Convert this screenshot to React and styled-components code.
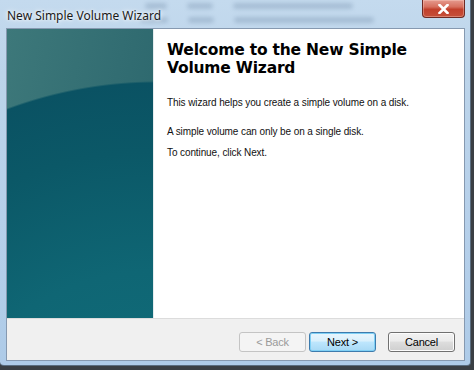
import styled, { createGlobalStyle } from 'styled-components';

const GlobalStyle = createGlobalStyle`
  html, body {
    margin: 0;
    padding: 0;
    width: 474px;
    height: 370px;
    overflow: hidden;
    background: #3a3f44;
  }
`;

const StyledWindow = styled.div`
  position: relative;
  width: 471px;
  height: 366px;
  box-sizing: border-box;
  padding: 0 5px 4px 6px;
  display: flex;
  flex-direction: column;
  background: linear-gradient(180deg, #c4daee 0%, #bcd4ea 20%, #b6d0ea 60%, #aecbe8 100%);
  border-right: 1px solid #5a6d80;
  border-bottom: 1px solid #5a6d80;
  border-radius: 0 0 4px 4px;
  overflow: hidden;
  font-family: 'Liberation Sans', Arial, sans-serif;
`;

// blurred window behind the aero glass title bar
const Backdrop = styled.div`
  position: absolute;
  top: 3px;
  left: 140px;
  right: 60px;
  display: flex;
  flex-direction: column;
  gap: 8px;
  filter: blur(2px);
  opacity: 0.28;
  pointer-events: none;
`;

const BackdropRow = styled.div`
  display: flex;
  gap: 20px;
  padding-left: ${(p) => p.$indent || 0}px;
`;

const Smudge = styled.div`
  width: ${(p) => p.$w}px;
  height: 6px;
  border-radius: 3px;
  background: #5d7896;
`;

const TitleBar = styled.div`
  position: relative;
  height: 28px;
  display: flex;
  align-items: flex-start;
  justify-content: space-between;
  flex-shrink: 0;
`;

const Title = styled.span`
  margin-top: 7px;
  margin-left: 1px;
  font-family: 'Noto Sans', 'Open Sans', sans-serif;
  font-size: 12px;
  color: #1a1a1a;
  text-shadow: 0 0 6px #ffffff, 0 0 3px #ffffff;
`;

const CloseButton = styled.div`
  width: 43px;
  height: 18px;
  box-sizing: border-box;
  border: 1px solid #6e2a24;
  border-top: none;
  border-radius: 0 0 4px 4px;
  background: linear-gradient(180deg, #e59a8e 0%, #d7705f 40%, #c2402c 55%, #c6503a 100%);
  box-shadow: inset 0 0 0 1px rgba(255, 220, 210, 0.35);
  display: flex;
  align-items: center;
  justify-content: center;
`;

const Client = styled.div`
  flex: 1;
  display: flex;
  flex-direction: column;
  border: 1px solid #8699b0;
  background: #f0f0f0;
`;

const Body = styled.div`
  height: 289px;
  display: flex;
`;

const SidePanel = styled.div`
  width: 146px;
  flex-shrink: 0;
  background:
    radial-gradient(circle 430px at 150px 482px,
      #12727e 0px, #0f6674 240px, #0b5867 360px, #0a5263 428px,
      transparent 430px),
    linear-gradient(100deg, #3d787a 0%, #326d72 60%, #2b666c 100%);
  border-right: 1px solid #e4ecee;
`;

const Content = styled.div`
  flex: 1;
  background: #ffffff;
  padding: 12px 12px 0 13px;
`;

const Heading = styled.h1`
  margin: 0 0 19px;
  font-family: 'DejaVu Sans', Verdana, sans-serif;
  font-weight: bold;
  font-size: 15.5px;
  line-height: 18px;
  color: #000;
  letter-spacing: -0.2px;
`;

const Paragraph = styled.p`
  margin: 0 0 ${(p) => p.$gap || 15}px;
  font-family: 'Liberation Sans', Arial, sans-serif;
  font-size: 10px;
  line-height: 13px;
  color: #111;
  letter-spacing: -0.1px;
`;

const Footer = styled.div`
  flex: 1;
  display: flex;
  justify-content: flex-end;
  align-items: flex-start;
  padding: 13px 9px 0 0;
  border-top: 1px solid #dcdcdc;
  background: #f0f0f0;
`;

const Button = styled.button`
  width: 67px;
  height: 20px;
  margin-left: ${(p) => p.$gap || 0}px;
  padding: 0;
  box-sizing: border-box;
  border-radius: 3px;
  font-family: 'Liberation Sans', Arial, sans-serif;
  font-size: 11px;
  letter-spacing: -0.2px;
  color: ${(p) => (p.$disabled ? '#9a9a9a' : '#000')};
  border: 1px solid ${(p) => (p.$disabled ? '#c4c4c4' : p.$primary ? '#3d7bad' : '#707070')};
  background: ${(p) =>
    p.$disabled
      ? '#f4f4f4'
      : p.$primary
      ? 'linear-gradient(180deg, #eaf6fd 0%, #d9f0fc 45%, #bee6fd 50%, #a7d9f5 100%)'
      : 'linear-gradient(180deg, #f2f2f2 0%, #ebebeb 45%, #dddddd 50%, #cfcfcf 100%)'};
  box-shadow: ${(p) =>
    p.$primary ? 'inset 0 0 0 1px #7fd0f5' : p.$disabled ? 'none' : 'inset 0 0 0 1px #fcfcfc'};
`;

const App = () => {
  return (
    <>
      <GlobalStyle />
      <StyledWindow>
        <Backdrop>
          <BackdropRow $indent={5}>
            <Smudge $w={22} />
            <Smudge $w={26} />
            <Smudge $w={120} />
          </BackdropRow>
          <BackdropRow>
            <Smudge $w={28} />
            <Smudge $w={26} />
            <Smudge $w={140} />
          </BackdropRow>
        </Backdrop>
        <TitleBar>
          <Title>New Simple Volume Wizard</Title>
          <CloseButton>
            <svg width="11" height="10" viewBox="0 0 11 10">
              <path
                d="M1.5 1 L9.5 9 M9.5 1 L1.5 9"
                stroke="#ffffff"
                strokeWidth="2.6"
                strokeLinecap="square"
              />
            </svg>
          </CloseButton>
        </TitleBar>
        <Client>
          <Body>
            <SidePanel />
            <Content>
              <Heading>
                Welcome to the New Simple
                <br />
                Volume Wizard
              </Heading>
              <Paragraph $gap={16}>
                This wizard helps you create a simple volume on a disk.
              </Paragraph>
              <Paragraph $gap={8}>A simple volume can only be on a single disk.</Paragraph>
              <Paragraph>To continue, click Next.</Paragraph>
            </Content>
          </Body>
          <Footer>
            <Button type="button" $disabled>
              &lt; Back
            </Button>
            <Button type="button" $primary $gap={3}>
              Next &gt;
            </Button>
            <Button type="button" $gap={12}>
              Cancel
            </Button>
          </Footer>
        </Client>
      </StyledWindow>
    </>
  );
};

export default App;
